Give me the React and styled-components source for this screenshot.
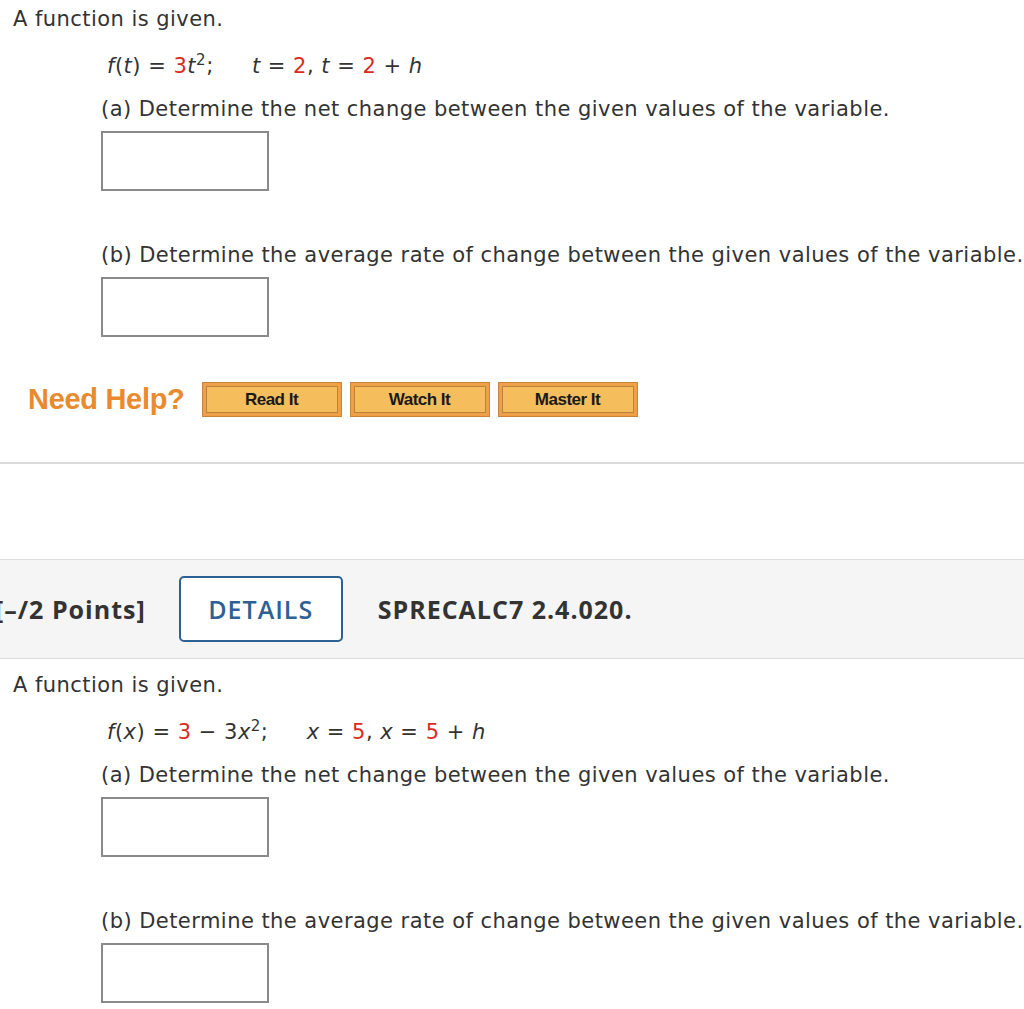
import React from "react";
import styled, { createGlobalStyle } from "styled-components";

const GlobalStyle = createGlobalStyle`
  html, body {
    margin: 0;
    padding: 0;
    background: #ffffff;
  }
  body {
    font-family: "DejaVu Sans", Verdana, sans-serif;
    color: #333333;
    overflow: hidden;
  }
`;

const Page = styled.div`
  width: 1024px;
  height: 1009px;
  overflow: hidden;
`;

const Question = styled.section`
  padding-left: 13px;
  padding-top: ${(p) => p.$top || 0}px;
`;

const Intro = styled.p`
  margin: 0;
  font-size: 21px;
  letter-spacing: 0.45px;
  line-height: 24px;
  color: #333;
`;

const Body = styled.div`
  margin-left: 88px;
  display: flex;
  flex-direction: column;
  align-items: flex-start;
`;

const Formula = styled.div`
  margin-top: 23px;
  padding-left: 6px;
  font-size: 21px;
  letter-spacing: 0.5px;
  line-height: 24px;
  color: #333;
  white-space: pre;
  i {
    font-style: italic;
  }
  sup {
    font-size: 15px;
    line-height: 0;
    vertical-align: 8px;
  }
`;

const Spacer = styled.span`
  display: inline-block;
  width: ${(p) => p.$w}px;
`;

const Red = styled.span`
  color: #d92b1e;
`;

const PartLabel = styled.p`
  margin: ${(p) => p.$gap}px 0 0;
  font-size: 21px;
  letter-spacing: 0.45px;
  line-height: 24px;
  color: #333;
  white-space: nowrap;
`;

const AnswerBox = styled.input`
  margin-top: 10px;
  width: 168px;
  height: 60px;
  box-sizing: border-box;
  border: 2px solid #8a8a8a;
  background: #fff;
  padding: 0;
`;

const HelpRow = styled.div`
  display: flex;
  align-items: center;
  margin-top: 45px;
  padding-left: 28px;
`;

const NeedHelp = styled.span`
  font-family: "Liberation Sans", Arial, sans-serif;
  font-weight: bold;
  font-size: 29px;
  color: #e98a2e;
  margin-right: 17px;
  letter-spacing: -0.3px;
`;

const HelpButton = styled.button`
  width: 140px;
  height: 35px;
  margin-right: 8px;
  padding: 3px;
  box-sizing: border-box;
  border: 1px solid #c7843b;
  background: #efa047;
  cursor: pointer;
  display: flex;
`;

const ButtonFace = styled.span`
  flex: 1;
  display: flex;
  align-items: center;
  justify-content: center;
  border: 1px solid #b9823f;
  background: #f5bd5b;
  font-family: "Liberation Sans", Arial, sans-serif;
  font-weight: bold;
  font-size: 17px;
  color: #1a1a1a;
  letter-spacing: -0.5px;
`;

const Divider = styled.hr`
  margin: 45px 0 0;
  border: 0;
  border-top: 2px solid #dadada;
  height: 0;
`;

const Band = styled.div`
  margin-top: 95px;
  height: 100px;
  box-sizing: border-box;
  border-top: 1px solid #dddddd;
  border-bottom: 1px solid #dddddd;
  background: #f5f5f5;
  display: flex;
  align-items: center;
  font-family: "Open Sans", sans-serif;
  font-size: 25px;
  letter-spacing: 1px;
`;

const Points = styled.span`
  margin-left: -5px;
  font-weight: 700;
  color: #333;
  margin-right: 33px;
`;

const DetailsButton = styled.button`
  width: 164px;
  height: 66px;
  box-sizing: border-box;
  border: 2px solid #2d6194;
  border-radius: 5px;
  background: #ffffff;
  color: #2d6194;
  font-family: "Open Sans", sans-serif;
  font-weight: 600;
  font-size: 25px;
  letter-spacing: 1px;
  margin-right: 35px;
  padding: 0;
  cursor: pointer;
`;

const Code = styled.span`
  font-weight: 700;
  color: #333;
`;

function QuestionBlock({ top, formula }) {
  return (
    <Question $top={top}>
      <Intro>A function is given.</Intro>
      <Body>
        <Formula>{formula}</Formula>
        <PartLabel $gap={19}>
          (a) Determine the net change between the given values of the variable.
        </PartLabel>
        <AnswerBox type="text" />
        <PartLabel $gap={52}>
          (b) Determine the average rate of change between the given values of the variable.
        </PartLabel>
        <AnswerBox type="text" />
      </Body>
    </Question>
  );
}

export default function App() {
  const f1 = (
    <>
      <i>f</i>(<i>t</i>) = <Red>3</Red>
      <i>t</i>
      <sup>2</sup>;<Spacer $w={31} /> <i>t</i> = <Red>2</Red>, <i>t</i> = <Red>2</Red> + <i>h</i>
    </>
  );
  const f2 = (
    <>
      <i>f</i>(<i>x</i>) = <Red>3</Red> − 3<i>x</i>
      <sup>2</sup>;<Spacer $w={31} /> <i>x</i> = <Red>5</Red>, <i>x</i> = <Red>5</Red> + <i>h</i>
    </>
  );

  return (
    <Page>
      <GlobalStyle />
      <QuestionBlock top={7} formula={f1} />
      <HelpRow>
        <NeedHelp>Need Help?</NeedHelp>
        <HelpButton>
          <ButtonFace>Read It</ButtonFace>
        </HelpButton>
        <HelpButton>
          <ButtonFace>Watch It</ButtonFace>
        </HelpButton>
        <HelpButton>
          <ButtonFace>Master It</ButtonFace>
        </HelpButton>
      </HelpRow>
      <Divider />
      <Band>
        <Points>[–/2 Points]</Points>
        <DetailsButton>DETAILS</DetailsButton>
        <Code>SPRECALC7 2.4.020.</Code>
      </Band>
      <QuestionBlock top={14} formula={f2} />
    </Page>
  );
}
